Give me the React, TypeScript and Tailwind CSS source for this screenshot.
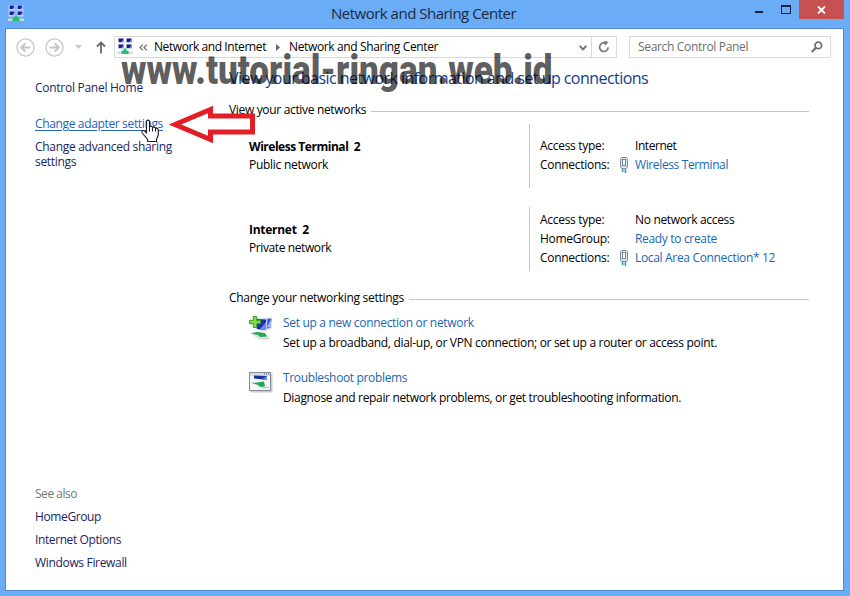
import type { ReactNode } from "react";

function NetworkIcon() {
  return (
    <svg width="16" height="18" viewBox="0 0 16 18" className="shrink-0">
      {[[1, 0], [9, 0], [1, 6], [9, 6]].map(([x, y]) => (
        <g key={`${x}-${y}`}>
          <rect x={x - 0.3} y={y} width="6.6" height="5.4" fill="#e3e7ee" />
          <rect x={x + 0.6} y={y + 0.5} width="4.8" height="3.6" fill="#1a1a9c" />
          <path d={`M${x + 3.4} ${y + 4.1}L${x + 5.4} ${y + 1}V${y + 4.1}Z`} fill="#7c97ee" />
        </g>
      ))}
      <path d="M0 14.7H16" stroke="#d3dadd" strokeWidth="2.4" />
      <path d="M6.7 10.500H9.3V12.500H11.500V16H4.500V12.500H6.7Z" fill="#22bf78" />
    </svg>
  );
}

function PlugIcon() {
  return (
    <svg width="10" height="16" viewBox="0 0 10 16" className="shrink-0">
      <path d="M1.5 1.5L3 .5H7L8.5 1.5V10L7.3 11.5H2.7L1.5 10Z" fill="#dbe2e9" stroke="#84909c" />
      <rect x="3.5" y="2.5" width="3" height="6" fill="#f8fafc" stroke="#66788c" strokeWidth=".9" />
      <path d="M3.6 12V15M6.4 12V16" stroke="#2e9cc8" strokeWidth="1.6" />
    </svg>
  );
}

function NewConnectionIcon() {
  return (
    <svg width="24" height="26" viewBox="0 0 24 26" className="shrink-0">
      <path d="M13 3L23.5 2.5L22.5 14L14 16Z" fill="#dfe6f5" />
      <path d="M14 4L22.5 3.5L21.5 13L15 14Z" fill="#3c54cf" />
      <path d="M18 12L22.5 3.5L21.5 13Z" fill="#a7baf5" />
      <path d="M6 3L18.5 3.5L17.5 16.5L7 15Z" fill="#d8e0f2" />
      <path d="M7 4L17.3 4.5L16.5 15L8 14Z" fill="#1c2fae" />
      <path d="M11 14.3L17 7L16.5 15Z" fill="#6f8cf0" />
      <path d="M1 18L9 16.5L21 22L18 24.5L7 22.5Z" fill="#dfe4e2" />
      <path d="M9 24L20 23.4" stroke="#c9cfcd" />
      <path d="M2 18.5L8 17L16 18L18 21.5L11 22L9 20Z" fill="#24a858" />
      <path d="M4.3 1.5H7.7V5.3H11.5V8.7H7.7V12.5H4.3V8.7H.5V5.3H4.3Z" fill="#7fdc45" stroke="#3c9c25" />
    </svg>
  );
}

function TroubleshootIcon() {
  return (
    <svg width="24" height="21" viewBox="0 0 24 21" className="shrink-0">
      <rect x="1.5" y="1.5" width="22" height="19" fill="#c9ccd1" />
      <rect x=".5" y=".5" width="21" height="18" fill="#f4f6f9" stroke="#858c96" />
      <path d="M1 2.5H21" stroke="#d6dbe3" strokeWidth="3" />
      <path d="M15 2H20" stroke="#59616e" strokeDasharray="1 1" />
      <path d="M5 3.5L18 4V8L14 7.5L5 6.5Z" fill="#1c2f9e" />
      <path d="M13 7.3L18 4V8Z" fill="#6f8cf0" />
      <path d="M2.5 11H9M13 15.5H20" stroke="#c4cac8" strokeWidth="1.6" />
      <path d="M4 11.5L11 10L15 9.5L16 14.5L11 15L9 13Z" fill="#24a858" />
    </svg>
  );
}

function NavCircle({ flip = false }: { flip?: boolean }) {
  return (
    <svg width="19" height="19" viewBox="0 0 20 20" className={`shrink-0 ${flip ? "-scale-x-100" : ""}`} fill="none" stroke="#c6c6c6">
      <circle cx="10" cy="10" r="9" strokeWidth="1.4" />
      <path d="M15 10H6M9.8 5.8L5.6 10L9.8 14.2" strokeWidth="2.2" />
    </svg>
  );
}

function SectionHeading({ children, className = "" }: { children: ReactNode; className?: string }) {
  return (
    <div className={`flex h-4 items-center ${className}`}>
      <h2>{children}</h2>
      <div className="mt-[3px] ml-[5px] h-px flex-1 bg-[#c6c6c6]" />
    </div>
  );
}

function Row({ label, plug = false, children }: { label: string; plug?: boolean; children: ReactNode }) {
  return (
    <div className="flex h-[19px] items-center">
      <span className="w-[79px] tracking-[-0.29px]">{label}</span>
      <span className="flex w-4 items-center">{plug && <PlugIcon />}</span>
      {children}
    </div>
  );
}

const link = "text-[#1a66b3]";

export default function App() {
  return (
    <div className="relative flex h-[596px] w-[850px] flex-col overflow-hidden bg-[#6bacf7] font-['Open_Sans','Noto_Sans',sans-serif] text-[12px] leading-4 tracking-[-0.33px] whitespace-pre text-black">
      <header className="flex h-7 items-start">
        <div className="w-[331px] pt-[5px] pl-2">
          <NetworkIcon />
        </div>
        <h1 className="mt-[3px] w-[424px] text-[15px] leading-5 tracking-[-0.5px] text-[#1c2a3c]">Network and Sharing Center</h1>
        <div className="mt-[11px] h-[2px] w-2 bg-[#15233a]" />
        <div className="mt-[5px] ml-[18px] h-[9px] w-[10px] border border-t-2 border-[#15233a]" />
        <div className="ml-2 flex h-[19px] w-[45px] items-center justify-center bg-[#c75050]">
          <svg width="9" height="8" viewBox="0 0 9 8" stroke="#fff" strokeWidth="1.8">
            <path d="M1 .5L8 7.5M8 .5L1 7.5" />
          </svg>
        </div>
      </header>

      <div className="ml-[5px] flex h-[563px] w-[839px] flex-col border border-[#5489cc] bg-white">
        <nav className="mt-[7px] flex h-[22px] items-center pl-[10px]">
          <NavCircle />
          <div className="w-[10px]" />
          <NavCircle flip />
          <svg width="7" height="4" viewBox="0 0 7 4" className="ml-[11px]">
            <path d="M0 0H7L3.5 4Z" fill="#c8c8c8" />
          </svg>
          <svg width="10" height="13" viewBox="0 0 10 13" className="ml-[14px]" fill="none" stroke="#6a6a6a" strokeWidth="1.8">
            <path d="M5 12.5V1.5M1 5.5L5 1.5L9 5.5" />
          </svg>
          <div className="ml-2 flex h-[22px] w-[503px] items-center border border-[#d9d9d9] pl-[2px]">
            <NetworkIcon />
            <svg width="9" height="7" viewBox="0 0 9 7" className="ml-[6px]" fill="none" stroke="#666" strokeWidth="1.1">
              <path d="M3.8 .7L1 3.5L3.8 6.3M7.8 .7L5 3.5L7.8 6.3" />
            </svg>
            <span className="ml-[6px] w-[122px] tracking-[-0.42px]">Network and Internet</span>
            <svg width="4" height="7" viewBox="0 0 4 7">
              <path d="M0 0L4 3.5L0 7Z" fill="#666" />
            </svg>
            <span className="ml-[9px] w-[290px] tracking-[-0.36px]">Network and Sharing Center</span>
            <svg width="8" height="6" viewBox="0 0 8 6" className="mt-[2px]" fill="none" stroke="#6c6c6c" strokeWidth="1.9">
              <path d="M.7 .8L4 4.3L7.3 .8" />
            </svg>
            <div className="ml-[4px] h-5 w-px bg-[#d9d9d9]" />
            <svg width="12" height="12" viewBox="0 0 12 12" className="ml-[6px]" fill="none" stroke="#7a7a7a" strokeWidth="1.7">
              <path d="M8.8 3A4.3 4.3 0 1 0 10.2 6.4" />
              <path d="M6 0L10.6 .8L7 4.8Z" fill="#7a7a7a" stroke="none" />
            </svg>
          </div>
          <div className="ml-3 flex h-[22px] w-[202px] items-center justify-between border border-[#d9d9d9] pr-[7px] pl-2 text-[#6d6d6d]">
            <span>Search Control Panel</span>
            <svg width="12" height="12" viewBox="0 0 12 12" fill="none" stroke="#6f6f6f">
              <circle cx="7.3" cy="4.4" r="3.3" strokeWidth="1.7" />
              <path d="M5 6.8L.8 11" strokeWidth="2.3" />
            </svg>
          </div>
        </nav>

        <div className="flex flex-1">
          <aside className="flex w-[223px] flex-col pl-[29px] text-[#1c2460]">
            <a className="mt-[22px] tracking-[-0.27px]">Control Panel Home</a>
            <a className="mt-5 tracking-[-0.35px] text-[#2264c4] underline underline-offset-2">Change adapter settings</a>
            <a className="mt-[7px] leading-[15px] tracking-[-0.3px]">{"Change advanced sharing\nsettings"}</a>
            <span className="mt-[317px] tracking-[-0.47px] text-[#777]">See also</span>
            <a className="mt-[7px] tracking-[-0.38px]">HomeGroup</a>
            <a className="mt-[7px] tracking-[-0.4px]">Internet Options</a>
            <a className="mt-[7px]">Windows Firewall</a>
          </aside>

          <main className="w-[580px]">
            <h1 className="mt-[10px] text-[16px] leading-5 tracking-[-0.545px] text-[#123c8c]">View your basic network information and set up connections</h1>
            <SectionHeading className="mt-[14px]">View your active networks</SectionHeading>

            <section className="mt-[6px] flex h-16 pl-5">
              <div className="w-[280px] pt-[15px]">
                <div className="font-bold tracking-[-0.47px]">Wireless Terminal  2</div>
                <div className="mt-[2px] tracking-[-0.28px]">Public network</div>
              </div>
              <div className="border-l border-[#c6c6c6] pt-[12px] pl-[10px]">
                <Row label="Access type:"><span className="tracking-[-0.45px]">Internet</span></Row>
                <Row label="Connections:" plug><a className={`${link} tracking-[-0.38px]`}>Wireless Terminal</a></Row>
              </div>
            </section>

            <section className="mt-[19px] flex h-16 pl-5">
              <div className="w-[280px] pt-[15px]">
                <div className="font-bold tracking-[-0.27px]">Internet  2</div>
                <div className="mt-[2px] tracking-[-0.4px]">Private network</div>
              </div>
              <div className="border-l border-[#c6c6c6] pt-[3px] pl-[10px]">
                <Row label="Access type:">No network access</Row>
                <Row label="HomeGroup:"><a className={link}>Ready to create</a></Row>
                <Row label="Connections:" plug><a className={link}>Local Area Connection* 12</a></Row>
              </div>
            </section>

            <SectionHeading className="mt-[19px] tracking-[-0.28px]">Change your networking settings</SectionHeading>

            <section className="mt-[9px] flex pl-5">
              <div className="w-[34px]"><NewConnectionIcon /></div>
              <div>
                <a className={`block tracking-[-0.31px] ${link}`}>Set up a new connection or network</a>
                <p className="mt-1 tracking-[-0.313px]">Set up a broadband, dial-up, or VPN connection; or set up a router or access point.</p>
              </div>
            </section>
            <section className="mt-[19px] flex pl-5">
              <div className="w-[34px] pt-[2px]"><TroubleshootIcon /></div>
              <div>
                <a className={`block tracking-[-0.35px] ${link}`}>Troubleshoot problems</a>
                <p className="mt-1 tracking-[-0.343px]">Diagnose and repair network problems, or get troubleshooting information.</p>
              </div>
            </section>
          </main>
        </div>
      </div>

      <div className="absolute top-[45px] left-[121px] origin-left scale-x-[0.856] font-['Roboto',sans-serif] text-[41px] leading-[50px] font-black tracking-normal text-black/65">
        www.tutorial-ringan.web.id
      </div>

      <svg width="90" height="42" viewBox="0 0 90 42" className="absolute top-[104px] left-[166px]">
        <path d="M9 20.5L44.5 5.500V12H86.500V28H44.500V35.500Z" fill="#fff" stroke="#e41e26" strokeWidth="5" />
      </svg>
      <svg width="20" height="24" viewBox="0 0 20 24" className="absolute top-[119px] left-[140px]" strokeLinejoin="round">
        <path
          d="M6.500 14V2.500C6.500 .6 9.500 .6 9.500 2.500V8C10.500 6.700 12.300 7.200 12.500 8.500C13.700 7.500 15.300 8.200 15.500 9.500C16.800 8.800 18.300 9.500 18.300 11V16L16.500 20.500V22.500H7.700V20.500L2.200 14C1 12 3.500 10.600 4.800 12.200Z"
          fill="#fff"
          stroke="#1b1b1b"
          strokeWidth="1.100"
        />
        <path d="M9.500 8V12.500M12.500 8.500V12.500M15.500 9.500V12.500" stroke="#1b1b1b" />
      </svg>
    </div>
  );
}
